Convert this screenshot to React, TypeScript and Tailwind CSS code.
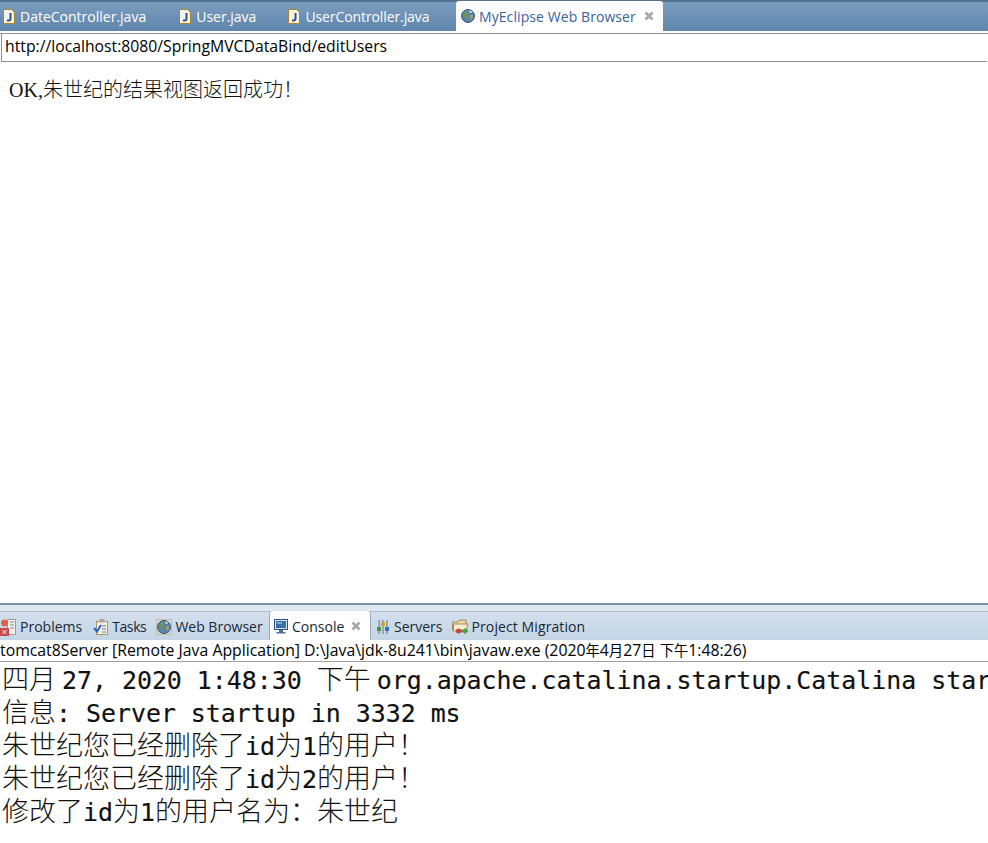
import React from "react";

const ui = "font-['Open_Sans','Noto_Sans_CJK_SC',sans-serif]";

function JavaIcon() {
  return (
    <svg width="12" height="15" viewBox="0 0 12 15" className="shrink-0">
      <path d="M.5.5H8.500L11.500 3.500V14.500H.5Z" fill="#f6f3e4" stroke="#a8842f" />
      <path d="M7.500 4V9.500Q7.500 11.500 5.500 11.500H4" fill="none" stroke="#2f5488" strokeWidth="2" />
    </svg>
  );
}

function Globe({ size = 14 }: { size?: number }) {
  return (
    <svg width={size} height={size} viewBox="0 0 14 14" className="shrink-0">
      <circle cx="7" cy="7" r="6.500" fill="#4f87b8" stroke="#46586a" />
      <path d="M3 3.500 6.500 2 8 4 6 6 7.500 8.500 6 11.500 4.500 9 2.500 7Z" fill="#70935a" />
      <path d="M9 6 12 6 11.500 9.500 9.500 11Z" fill="#b59a5a" />
      <path d="M8.500 1.500 11 2.500 10 4 8.500 3.500Z" fill="#e8eef2" />
    </svg>
  );
}

function Close() {
  return (
    <svg width="10" height="10" viewBox="0 0 10 10" className="shrink-0">
      <path d="M1.500 1.500 8.500 8.500M8.500 1.500 1.500 8.500" stroke="#a6a6a6" strokeWidth="2.600" />
    </svg>
  );
}

function ProblemsIcon() {
  return (
    <svg width="16" height="18" viewBox="0 0 16 18" className="shrink-0">
      <path d="M7.500 1.500H15.500V16.500H7.500Z" fill="#f1f1ef" stroke="#9a9a9a" />
      <path d="M10 4H14M10 7H14M10 10H14" stroke="#8a8a8a" />
      <circle cx="4.500" cy="5" r="3.500" fill="#e0604f" />
      <rect x="0" y="10" width="9" height="8" fill="#c9484a" />
      <path d="M2.500 12 6.500 16M6.500 12 2.500 16" stroke="#fff" />
    </svg>
  );
}

function TasksIcon() {
  return (
    <svg width="16" height="16" viewBox="0 0 16 16" className="shrink-0">
      <rect x="3.500" y="2.500" width="11" height="13" fill="#f5eedc" stroke="#a8946e" />
      <rect x="6.500" y="0" width="5" height="3.500" fill="#a9a9a9" />
      <path d="M9 7H13M9 10H13M9 13H13" stroke="#6f7f98" />
      <path d="M1 9 4 12.500 8 6" fill="none" stroke="#2163cf" strokeWidth="2" />
    </svg>
  );
}

function ConsoleIcon() {
  return (
    <svg width="14" height="15" viewBox="0 0 14 15" className="shrink-0">
      <rect x=".5" y=".5" width="13" height="10" fill="#d9e5f3" stroke="#2a5586" />
      <rect x="2" y="2" width="10" height="7" fill="#3d6ea3" />
      <path d="M3 4H8" stroke="#cfe0f2" />
      <path d="M5 11H9V13H11.500V14.500H2.500V13H5Z" fill="#4c7099" />
    </svg>
  );
}

function ServersIcon() {
  return (
    <svg width="14" height="16" viewBox="0 0 14 16" className="shrink-0">
      <path d="M3 1V15M7 1V15M11 1V15" stroke="#5f7389" />
      <rect x="1" y="8" width="4" height="4" fill="#4f8f3a" />
      <rect x="5" y="3" width="4" height="4" fill="#d9a520" />
      <rect x="9" y="8" width="4" height="4" fill="#3d6fb5" />
    </svg>
  );
}

function MigrationIcon() {
  return (
    <svg width="17" height="17" viewBox="0 0 17 17" className="shrink-0">
      <path d="M.5 4H6L7.500 2H14V12H.5Z" fill="#efd9a0" stroke="#a08c62" />
      <path d="M1.500 6H16L14 13H1.500Z" fill="#f5ecd0" stroke="#a08c62" />
      <circle cx="6.500" cy="13" r="2.500" fill="#c8413c" />
      <path d="M9 11.500H12.500V9.500L16.500 13 12.500 16.500V14.500H9Z" fill="#4e9a3c" />
    </svg>
  );
}

function Latin({ children }: { children: React.ReactNode }) {
  return <span className="text-[24.9px] font-['DejaVu_Sans_Mono',monospace] [-webkit-text-stroke:0.15px_black]">{children}</span>;
}

function ConsoleLine({ children }: { children: React.ReactNode }) {
  return <div className="h-[33px] leading-[31px] whitespace-nowrap">{children}</div>;
}

function Cjk({ children }: { children: React.ReactNode }) {
  return <span className="text-[14.3px]">{children}</span>;
}

export default function App() {
  return (
    <div className={`w-[988px] h-[843px] bg-white flex flex-col overflow-hidden ${ui}`}>
      <div className="h-[31px] shrink-0 flex items-end border-t-2 border-[#56718f] bg-gradient-to-b from-[#7b9cbd] to-[#5f85ad] text-[14px] whitespace-nowrap">
        <div className="h-[29px] w-[456px] flex items-center text-white pl-[3px]">
          <JavaIcon />
          <span className="ml-[5px]">DateController.java</span>
          <span className="ml-[33px]"><JavaIcon /></span>
          <span className="ml-[5px]">User.java</span>
          <span className="ml-[32px]"><JavaIcon /></span>
          <span className="ml-[5px] tracking-[-0.1px]">UserController.java</span>
        </div>
        <div className="h-[30px] w-[207px] bg-white rounded-t-[3px] flex items-center pl-[5px] text-[#3a62a0]">
          <Globe />
          <span className="ml-[4px] tracking-[0.08px]">MyEclipse Web Browser</span>
          <span className="ml-[8px]"><Close /></span>
        </div>
      </div>
      <div className="h-[3px] shrink-0 border-b border-[#8f8f8f]" />
      <div className="h-[28px] shrink-0 mx-[1px] border-b border-l border-[#8f8f8f] flex items-center pb-[2px] pl-[3px] text-[15.75px] text-black">
        http://localhost:8080/SpringMVCDataBind/editUsers
      </div>
      <div className="flex-1 pt-[15px] pl-[9px] text-[20px] leading-[26px] text-[#111] font-light whitespace-nowrap">
        <span className="font-['Liberation_Serif','Noto_Sans_CJK_SC',serif]">OK,朱世纪的结果视图返回成功！</span>
      </div>
      <div className="shrink-0 h-[37px] flex flex-col border-t-2 border-[#7c8fa5] bg-[#dfe8f1]">
        <div className="h-[6px] shrink-0" />
        <div className="flex-1 flex items-stretch border-t border-[#a9bbcd] bg-gradient-to-b from-[#d3e0ed] to-[#c5d5e5] text-[14px] text-[#1a2735] whitespace-nowrap">
          <div className="w-[269px] flex items-center pt-[1px]">
            <ProblemsIcon />
            <span className="ml-[4px]">Problems</span>
            <span className="ml-[11px]"><TasksIcon /></span>
            <span className="ml-[3px] tracking-[-0.4px]">Tasks</span>
            <span className="ml-[10px] border border-[#c8bd9a] flex"><Globe size={14} /></span>
            <span className="ml-[3px]">Web Browser</span>
          </div>
          <div className="-mt-[1px] w-[102px] bg-white border-x border-[#9aabbc] rounded-t-[3px] flex items-center pl-[4px] pt-[1px]">
            <ConsoleIcon />
            <span className="ml-[4px]">Console</span>
            <span className="ml-[7px]"><Close /></span>
          </div>
          <div className="flex items-center pl-[5px] pt-[1px]">
            <ServersIcon />
            <span className="ml-[4px]">Servers</span>
            <span className="ml-[9px]"><MigrationIcon /></span>
            <span className="ml-[3px] tracking-[0.1px]">Project Migration</span>
          </div>
        </div>
      </div>
      <div className="h-[22px] shrink-0 border-b border-[#a0a0a0] flex items-center text-[15.8px] text-black whitespace-pre">
        <span>tomcat8Server [Remote Java Application] D:\Java\jdk-8u241\bin\javaw.exe (2020<Cjk>年</Cjk>4<Cjk>月</Cjk>27<Cjk>日</Cjk> <Cjk>下午</Cjk>1:48:26)</span>
      </div>
      <div className="shrink-0 h-[181px] pl-[2px] text-[27px] font-light text-[#111] font-['Noto_Sans_CJK_SC',sans-serif]">
        <ConsoleLine>四月 <Latin>27, 2020 1:48:30 </Latin>下午 <Latin>org.apache.catalina.startup.Catalina start</Latin></ConsoleLine>
        <ConsoleLine>信息<Latin>: Server startup in 3332 ms</Latin></ConsoleLine>
        <ConsoleLine>朱世纪您已经删除了<Latin>id</Latin>为<Latin>1</Latin>的用户！</ConsoleLine>
        <ConsoleLine>朱世纪您已经删除了<Latin>id</Latin>为<Latin>2</Latin>的用户！</ConsoleLine>
        <ConsoleLine>修改了<Latin>id</Latin>为<Latin>1</Latin>的用户名为：朱世纪</ConsoleLine>
      </div>
    </div>
  );
}
